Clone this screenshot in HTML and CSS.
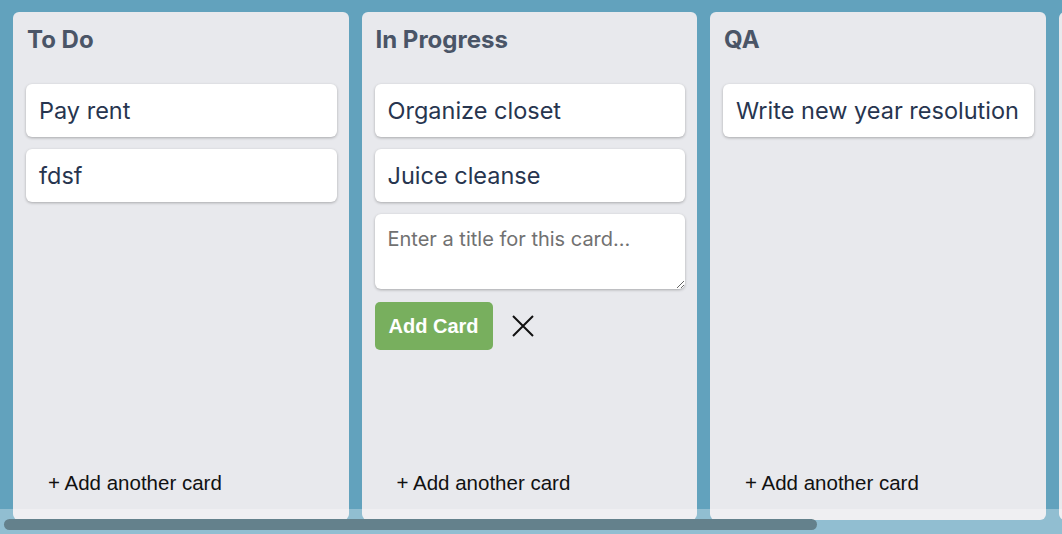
FILE: index.html
```html
<!DOCTYPE html>
<html lang="en">
<head>
<meta charset="utf-8">
<title>Board</title>
<link rel="stylesheet" href="styles.css">
</head>
<body>
<div class="board">
  <section class="list">
    <h2 class="list-title">To Do</h2>
    <div class="cards">
      <div class="card">Pay rent</div>
      <div class="card">fdsf</div>
    </div>
    <div class="list-footer">+ Add another card</div>
  </section>
  <section class="list">
    <h2 class="list-title">In Progress</h2>
    <div class="cards">
      <div class="card">Organize closet</div>
      <div class="card">Juice cleanse</div>
      <textarea class="composer" placeholder="Enter a title for this card..."></textarea>
      <div class="composer-actions">
        <button class="add-btn" type="button">Add Card</button>
        <span class="close-icon">
          <svg width="22" height="22" viewBox="0 0 22 22"><path d="M1 1 L21 21 M21 1 L1 21" stroke="#111" stroke-width="2" fill="none"/></svg>
        </span>
      </div>
    </div>
    <div class="list-footer">+ Add another card</div>
  </section>
  <section class="list">
    <h2 class="list-title">QA</h2>
    <div class="cards">
      <div class="card">Write new year resolution</div>
    </div>
    <div class="list-footer">+ Add another card</div>
  </section>
  <section class="list list-peek"></section>
</div>
<div class="scroll-track"><div class="scroll-thumb"></div></div>
</body>
</html>
```
FILE: styles.css
```css
html, body {
  margin: 0;
  padding: 0;
  height: 100%;
  overflow: hidden;
}
body {
  background: #62a2bd;
  font-family: Inter, "Noto Sans", sans-serif;
  position: relative;
}
.board {
  display: flex;
  gap: 13px;
  padding: 12px 13px 0;
  height: 534px;
  box-sizing: border-box;
}
.list {
  flex: 0 0 335.5px;
  height: 508px;
  background: #e8e9ed;
  border-radius: 6px;
  display: flex;
  flex-direction: column;
  box-sizing: border-box;
  padding: 13px 12px 26px 13px;
}
.list-title {
  margin: 0 0 30px 1px;
  font-size: 24px;
  line-height: 29px;
  font-weight: 700;
  color: #4a5567;
}
.cards {
  flex: 1;
  display: flex;
  flex-direction: column;
  gap: 12px;
}
.card {
  background: #fff;
  border-radius: 6px;
  padding: 12px 13px;
  font-size: 23.5px;
  line-height: 29px;
  color: #27354f;
  white-space: nowrap;
  box-shadow: 0 1px 3px rgba(0, 0, 0, 0.28);
}
.composer {
  display: block;
  height: 75px;
  box-sizing: border-box;
  border: none;
  border-radius: 6px;
  padding: 13px 13px;
  font-family: Inter, "Noto Sans", sans-serif;
  font-size: 20px;
  line-height: 24px;
  color: #27354f;
  box-shadow: 0 1px 3px rgba(0, 0, 0, 0.28);
  resize: vertical;
  outline: none;
  margin: 0;
}
.composer::placeholder {
  color: #717171;
}
.composer-actions {
  display: flex;
  align-items: center;
  gap: 19px;
  margin-top: 1px;
}
.add-btn {
  width: 118px;
  height: 48px;
  border: none;
  border-radius: 5px;
  background: #78af5e;
  color: #fff;
  font-family: "Liberation Sans", Arial, sans-serif;
  font-weight: 700;
  font-size: 20px;
  padding: 0;
}
.close-icon {
  display: flex;
  width: 22px;
  height: 22px;
}
.list-footer {
  padding-left: 22px;
  font-family: "Liberation Sans", Arial, sans-serif;
  font-size: 20.5px;
  line-height: 23px;
  color: #111;
}
.scroll-track {
  position: absolute;
  left: 0;
  right: 0;
  top: 509px;
  height: 25px;
  background: rgba(255, 255, 255, 0.3);
}
.scroll-thumb {
  position: absolute;
  left: 4px;
  top: 10px;
  width: 813px;
  height: 11px;
  border-radius: 6px;
  background: #64818c;
}
```
